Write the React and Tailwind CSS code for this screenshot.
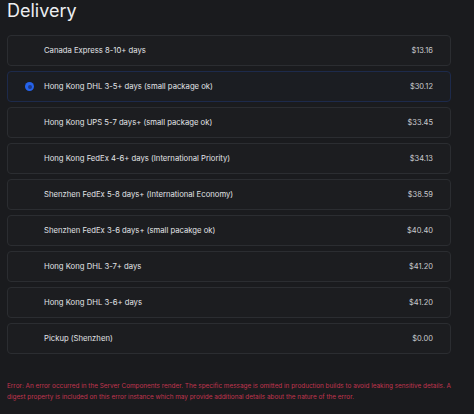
import React from 'react';

const options = [
  { label: 'Canada Express 8-10+ days', price: '$13.16' },
  { label: 'Hong Kong DHL 3-5+ days (small package ok)', price: '$30.12', selected: true },
  { label: 'Hong Kong UPS 5-7 days+ (small package ok)', price: '$33.45' },
  { label: 'Hong Kong FedEx 4-6+ days (International Priority)', price: '$34.13' },
  { label: 'Shenzhen FedEx 5-8 days+ (International Economy)', price: '$38.59' },
  { label: 'Shenzhen FedEx 3-6 days+ (small pacakge ok)', price: '$40.40' },
  { label: 'Hong Kong DHL 3-7+ days', price: '$41.20' },
  { label: 'Hong Kong DHL 3-6+ days', price: '$41.20' },
  { label: 'Pickup (Shenzhen)', price: '$0.00' },
];

export default function App() {
  return (
    <div
      className="min-h-screen w-full bg-[#1a1b1e] text-white px-[7px] pt-0 overflow-hidden"
      style={{ fontFamily: 'Inter, "Noto Sans", sans-serif' }}
    >
      <h1 className="text-[18px] leading-[22px] pt-0 mb-[13px] text-[#eceef1]">Delivery</h1>

      <div className="flex flex-col gap-[5px] w-[444px]">
        {options.map((o) => (
          <div
            key={o.label}
            className={
              'h-[31px] flex items-center rounded-[4px] border pr-[17px] ' +
              (o.selected ? 'border-[#1d2a4b] bg-[#1b1d22]' : 'border-[#2b2d31] bg-[#1c1d20]')
            }
          >
            <div className="w-[36px] pl-[17px] flex items-center shrink-0">
              {o.selected && (
                <span className="w-[9px] h-[9px] rounded-full bg-[#2563eb] flex items-center justify-center">
                  <span className="w-[4px] h-[4px] rounded-full bg-[#1e3a8a]" />
                </span>
              )}
            </div>
            <span className="text-[7.7px] text-[#e2e4e7] flex-1">{o.label}</span>
            <span className="text-[7.5px] text-[#c9cbcf]">{o.price}</span>
          </div>
        ))}
      </div>

      <p className="mt-[27px] text-[6.4px] leading-[11px] text-[#c0354f] w-[460px]">
        Error: An error occurred in the Server Components render. The specific message is omitted in production builds to avoid leaking sensitive details. A digest property is included on this error instance which may provide additional details about the nature of the error.
      </p>
    </div>
  );
}
